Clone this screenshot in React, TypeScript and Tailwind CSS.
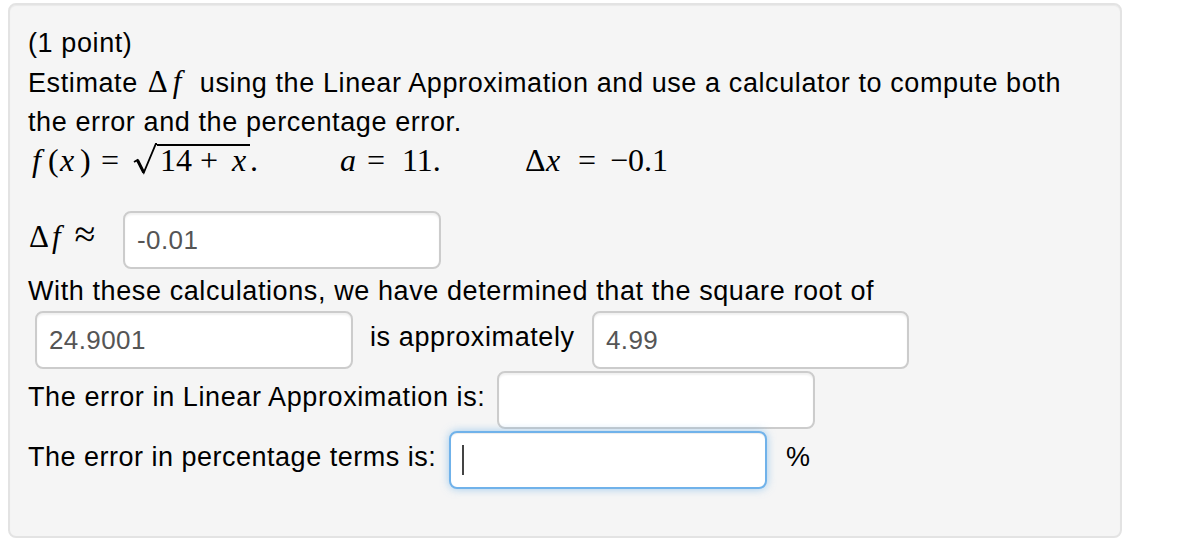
import React from "react";

function Box({ value, focused, w }: { value?: string; focused?: boolean; w: string }) {
  if (focused) {
    return (
      <div
        className={`${w} h-[58px] shrink-0 bg-white rounded-[8px] border-2 border-[#70b2ea] shadow-[inset_0_1px_1px_rgba(0,0,0,0.075),0_0_8px_rgba(102,175,233,0.6)] flex items-center pl-[11px]`}
      >
        <span className="block w-[2px] h-[30px] bg-[#444]" />
      </div>
    );
  }
  return (
    <div
      className={`${w} h-[58px] shrink-0 bg-white rounded-[8px] border-2 border-[#cccccc] shadow-[inset_0_2px_2px_rgba(0,0,0,0.06)] flex items-center pl-[12px] text-[#555] text-[26px] tracking-[0.4px] leading-none`}
    >
      {value}
    </div>
  );
}

const serif = "font-['Liberation_Serif','Times_New_Roman',serif] tracking-normal";

function Radical() {
  return (
    <svg width="24" height="32" viewBox="0 0 24 32" className="inline-block align-[-4px]">
      <path
        d="M1 19 L4.4 17 L10.8 29.6 L22.8 1 L24 1"
        fill="none"
        stroke="black"
        strokeWidth="1.8"
        strokeLinejoin="miter"
      />
      <path d="M4.4 17 L10.8 29.6" stroke="black" strokeWidth="3" />
    </svg>
  );
}

export default function App() {
  return (
    <div className="w-[1182px] h-[540px] bg-white pl-[8px] pt-[3px]">
      <div className="w-[1114px] h-[535px] bg-[#f5f5f5] border-2 border-[#e3e3e3] rounded-[8px] shadow-[inset_0_1px_1px_rgba(0,0,0,0.05)] pl-[18px] pt-[18px] font-['Liberation_Sans',Arial,sans-serif] text-[27px] tracking-[0.6px] text-black">
        <div className="leading-[40px]">(1 point)</div>
        <div className="leading-[40px] whitespace-nowrap">
          Estimate
          <span className={`${serif} inline-block w-[62px] pl-[10px] text-[31px] leading-[28px]`}>
            Δ<i className="ml-[5px]">f</i>
          </span>
          using the Linear Approximation and use a calculator to compute both
        </div>
        <div className="leading-[38px]">the error and the percentage error.</div>
        <div className={`leading-[42px] whitespace-nowrap`}>
          <span className={`${serif} text-[32px] leading-[28px]`}>
            <span className="inline-block w-[20px] pl-[4px]">
              <i>f</i>
            </span>
            <span className="inline-block w-[10px]">(</span>
            <span className="inline-block w-[22px] pl-[2px]">
              <i>x</i>
            </span>
            <span className="inline-block w-[21px]">)</span>
            <span className="inline-block w-[32px]">=</span>
            <Radical />
            <span className="inline-block border-t-2 border-black pl-[3px] pr-[1px]">
              <span className="inline-block w-[40px]">14</span>
              <span className="inline-block w-[28px]">+</span>
              <span className="inline-block w-[21px] pl-[4px]">
                <i>x</i>
              </span>
            </span>
            <span className="inline-block w-[90px]">.</span>
            <span className="inline-block w-[27px]">
              <i>a</i>
            </span>
            <span className="inline-block w-[35px]">=</span>
            <span className="inline-block w-[123px]">11.</span>
            <span className="inline-block w-[21px]">Δ</span>
            <span className="inline-block w-[32px]">
              <i>x</i>
            </span>
            <span className="inline-block w-[32px]">=</span>
            <span className="inline-block">−0.1</span>
          </span>
        </div>

        <div className="mt-[28px] h-[58px] flex items-center">
          <div className={`${serif} w-[95px] shrink-0 pl-[1px] text-[31px] leading-none mb-[12px] flex items-baseline`}>
            <span>Δ</span>
            <i className="ml-[3px]">f</i>
            <span className="ml-[14px] text-[38px] leading-none">≈</span>
          </div>
          <Box w="w-[318px]" value="-0.01" />
        </div>

        <div className="mt-[7px] leading-[30px] whitespace-nowrap">
          With these calculations, we have determined that the square root of
        </div>

        <div className="mt-[5px] h-[58px] flex items-center">
          <div className="ml-[7px]">
            <Box w="w-[318px]" value="24.9001" />
          </div>
          <div className="ml-[17px] w-[222px] shrink-0 leading-none mb-[5px] whitespace-nowrap">is approximately</div>
          <Box w="w-[317px]" value="4.99" />
        </div>

        <div className="mt-[2px] h-[58px] flex items-center">
          <div className="w-[469px] shrink-0 leading-none mb-[5px] whitespace-nowrap">
            The error in Linear Approximation is:
          </div>
          <Box w="w-[318px]" />
        </div>

        <div className="mt-[2px] h-[58px] flex items-center">
          <div className="w-[421px] shrink-0 leading-none mb-[5px] whitespace-nowrap tracking-[0.5px]">
            The error in percentage terms is:
          </div>
          <Box w="w-[318px]" focused />
          <div className="ml-[19px] leading-none mb-[5px]">%</div>
        </div>
      </div>
    </div>
  );
}
